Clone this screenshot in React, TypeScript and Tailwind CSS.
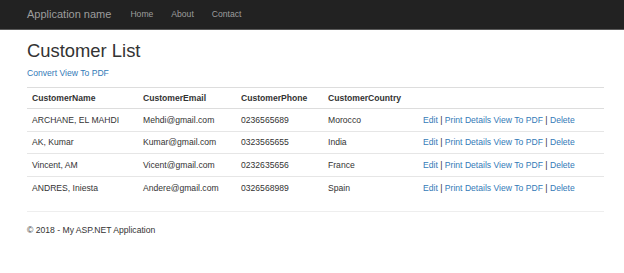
const customers = [
  { name: "ARCHANE, EL MAHDI", email: "Mehdi@gmail.com", phone: "0236565689", country: "Morocco" },
  { name: "AK, Kumar", email: "Kumar@gmail.com", phone: "0323565655", country: "India" },
  { name: "Vincent, AM", email: "Vicent@gmail.com", phone: "0232635656", country: "France" },
  { name: "ANDRES, Iniesta", email: "Andere@gmail.com", phone: "0326568989", country: "Spain" },
];

function Navbar() {
  return (
    <div className="h-[30px] bg-[#222222] border-b border-[#5a5a5a] flex items-center pl-[27px]">
      <span className="text-[11px] text-[#9d9d9d] mr-[19px]">Application name</span>
      <nav className="flex gap-[18px] text-[8.6px] text-[#9d9d9d]">
        <a>Home</a>
        <a>About</a>
        <a>Contact</a>
      </nav>
    </div>
  );
}

export default function App() {
  return (
    <div className="bg-white min-h-[273px] text-[#333333] text-[8.6px]" style={{ fontFamily: '"Liberation Sans", Arial, sans-serif' }}>
      <Navbar />
      <div className="ml-[27px] w-[577px]">
        <h2 className="mt-[11px] h-[20px] leading-[20px] text-[18.4px]">Customer List</h2>
        <p className="mt-[6px] leading-[12px]">
          <a className="text-[#337ab7]">Convert View To PDF</a>
        </p>
        <table className="mt-[8px] w-full table-fixed border-collapse">
          <colgroup>
            <col className="w-[111px]" />
            <col className="w-[98px]" />
            <col className="w-[87px]" />
            <col className="w-[95px]" />
            <col />
          </colgroup>
          <thead>
            <tr className="h-[21px] border-t border-b border-[#dddddd]">
              <th className="text-left font-bold px-[5px]">CustomerName</th>
              <th className="text-left font-bold px-[5px]">CustomerEmail</th>
              <th className="text-left font-bold px-[5px]">CustomerPhone</th>
              <th className="text-left font-bold px-[5px]">CustomerCountry</th>
              <th></th>
            </tr>
          </thead>
          <tbody>
            {customers.map((c, i) => (
              <tr key={c.phone} className={i < customers.length - 1 ? "h-[22.5px] border-b border-[#e6e6e6]" : "h-[22.5px]"}>
                <td className="px-[5px] pt-[1px]">{c.name}</td>
                <td className="px-[5px] pt-[1px]">{c.email}</td>
                <td className="px-[5px] pt-[1px]">{c.phone}</td>
                <td className="px-[5px] pt-[1px]">{c.country}</td>
                <td className="px-[5px] pt-[1px] text-[#337ab7]">
                  <a>Edit</a> <span className="text-[#333333]">|</span> <a>Print Details View To PDF</a>{" "}
                  <span className="text-[#333333]">|</span> <a>Delete</a>
                </td>
              </tr>
            ))}
          </tbody>
        </table>
        <hr className="mt-[12px] border-t border-[#eeeeee]" />
        <footer className="mt-[12px] leading-[12px]">© 2018 - My ASP.NET Application</footer>
      </div>
    </div>
  );
}
